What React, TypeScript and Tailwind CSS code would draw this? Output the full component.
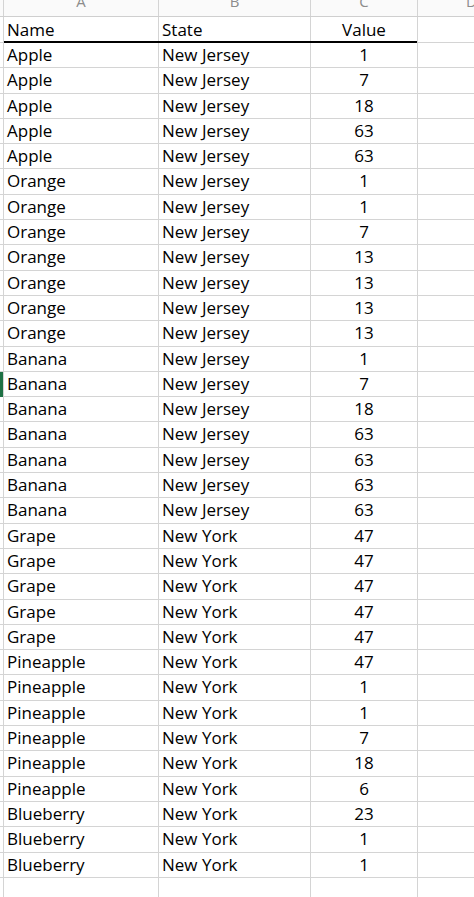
const rows: [string, string, number][] = [
  ["Apple", "New Jersey", 1],
  ["Apple", "New Jersey", 7],
  ["Apple", "New Jersey", 18],
  ["Apple", "New Jersey", 63],
  ["Apple", "New Jersey", 63],
  ["Orange", "New Jersey", 1],
  ["Orange", "New Jersey", 1],
  ["Orange", "New Jersey", 7],
  ["Orange", "New Jersey", 13],
  ["Orange", "New Jersey", 13],
  ["Orange", "New Jersey", 13],
  ["Orange", "New Jersey", 13],
  ["Banana", "New Jersey", 1],
  ["Banana", "New Jersey", 7],
  ["Banana", "New Jersey", 18],
  ["Banana", "New Jersey", 63],
  ["Banana", "New Jersey", 63],
  ["Banana", "New Jersey", 63],
  ["Banana", "New Jersey", 63],
  ["Grape", "New York", 47],
  ["Grape", "New York", 47],
  ["Grape", "New York", 47],
  ["Grape", "New York", 47],
  ["Grape", "New York", 47],
  ["Pineapple", "New York", 47],
  ["Pineapple", "New York", 1],
  ["Pineapple", "New York", 1],
  ["Pineapple", "New York", 7],
  ["Pineapple", "New York", 18],
  ["Pineapple", "New York", 6],
  ["Blueberry", "New York", 23],
  ["Blueberry", "New York", 1],
  ["Blueberry", "New York", 1],
];

// selected row in the row-header gutter
const SELECTED = 13;

export default function App() {
  return (
    <div
      className="w-[474px] h-[897px] overflow-hidden bg-white text-black"
      style={{ fontFamily: '"Open Sans", "Noto Sans", sans-serif' }}
    >
      {/* column letters, clipped at the top */}
      <div className="flex h-[17px] border-b border-[#cfcfcf] bg-[#fafafa] overflow-hidden text-[15px] text-[#8c8c8c] leading-[16px]">
        <div className="w-[4px] shrink-0 border-r border-[#d4d4d4]" />
        <div className="w-[155px] shrink-0 border-r border-[#d4d4d4] flex justify-center"><span className="-mt-[7px]">A</span></div>
        <div className="w-[152px] shrink-0 border-r border-[#d4d4d4] flex justify-center"><span className="-mt-[7px]">B</span></div>
        <div className="w-[107px] shrink-0 border-r border-[#d4d4d4] flex justify-center"><span className="-mt-[7px]">C</span></div>
        <div className="w-[107px] shrink-0 flex justify-center"><span className="-mt-[7px]">D</span></div>
      </div>

      {/* header row */}
      <div className="flex h-[26px] text-[17px] leading-[21px]">
        <div className="w-[4px] shrink-0 border-r border-b border-[#d4d4d4]" />
        <div className="flex w-[413px] shrink-0 border-b-2 border-black">
          <div className="w-[155px] shrink-0 border-r border-[#d4d4d4] pl-[3px] pt-[2px]">Name</div>
          <div className="w-[152px] shrink-0 border-r border-[#d4d4d4] pl-[3px] pt-[2px]">State</div>
          <div className="w-[106px] shrink-0 text-center pt-[2px]">Value</div>
        </div>
        <div className="w-[1px] shrink-0 bg-[#d4d4d4]" />
        <div className="w-[107px] shrink-0 border-b border-[#d4d4d4]" />
      </div>

      {rows.map(([name, state, value], i) => (
        <div key={i} className="flex h-[25.3px] text-[17px] leading-[21px]">
          <div
            className={
              i === SELECTED
                ? "w-[4px] shrink-0 border-r border-[#d4d4d4] bg-[#1e7145]"
                : "w-[4px] shrink-0 border-r border-b border-[#d4d4d4]"
            }
          />
          <div className="w-[155px] shrink-0 border-r border-b border-[#d4d4d4] pl-[3px] pt-[1px]">{name}</div>
          <div className="w-[152px] shrink-0 border-r border-b border-[#d4d4d4] pl-[3px] pt-[1px]">{state}</div>
          <div className="w-[107px] shrink-0 border-r border-b border-[#d4d4d4] text-center pt-[1px]">{value}</div>
          <div className="w-[107px] shrink-0 border-b border-[#d4d4d4]" />
        </div>
      ))}

      {/* empty row at the bottom */}
      <div className="flex h-[30px]">
        <div className="w-[4px] shrink-0 border-r border-[#d4d4d4]" />
        <div className="w-[155px] shrink-0 border-r border-[#d4d4d4]" />
        <div className="w-[152px] shrink-0 border-r border-[#d4d4d4]" />
        <div className="w-[107px] shrink-0 border-r border-[#d4d4d4]" />
        <div className="w-[107px] shrink-0" />
      </div>
    </div>
  );
}
